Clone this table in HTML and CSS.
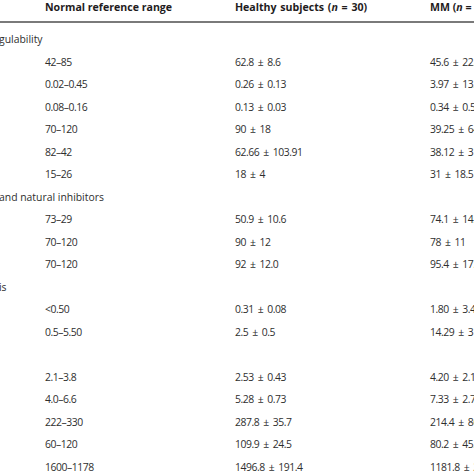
FILE: index.html
```html
<!DOCTYPE html>
<html>
<head>
<meta charset="utf-8">
<link rel="stylesheet" href="styles.css">
</head>
<body>
<div class="table">
  <div class="row head">
    <span class="c1"></span>
    <span class="c2">Normal reference range</span>
    <span class="c3">Healthy subjects (<i>n</i> = 30)</span>
    <span class="c4">MM (<i>n</i> = 30)</span>
  </div>
  <div class="rule"></div>
  <div class="tbody">
    <div class="row cat"><span class="lab">gulability</span></div>
    <div class="row"><span class="c1"></span><span class="c2 num">42–85</span><span class="c3 num">62.8 ± 8.6</span><span class="c4 num">45.6 ± 22.1</span></div>
    <div class="row"><span class="c1"></span><span class="c2 num">0.02–0.45</span><span class="c3 num">0.26 ± 0.13</span><span class="c4 num">3.97 ± 13.2</span></div>
    <div class="row"><span class="c1"></span><span class="c2 num">0.08–0.16</span><span class="c3 num">0.13 ± 0.03</span><span class="c4 num">0.34 ± 0.51</span></div>
    <div class="row"><span class="c1"></span><span class="c2 num">70–120</span><span class="c3 num">90 ± 18</span><span class="c4 num">39.25 ± 64.1</span></div>
    <div class="row"><span class="c1"></span><span class="c2 num">82–42</span><span class="c3 num">62.66 ± 103.91</span><span class="c4 num">38.12 ± 3</span></div>
    <div class="row"><span class="c1"></span><span class="c2 num">15–26</span><span class="c3 num">18 ± 4</span><span class="c4 num">31 ± 18.5</span></div>
    <div class="row cat"><span class="lab">and natural inhibitors</span></div>
    <div class="row"><span class="c1"></span><span class="c2 num">73–29</span><span class="c3 num">50.9 ± 10.6</span><span class="c4 num">74.1 ± 14.2</span></div>
    <div class="row"><span class="c1"></span><span class="c2 num">70–120</span><span class="c3 num">90 ± 12</span><span class="c4 num">78 ± 11</span></div>
    <div class="row"><span class="c1"></span><span class="c2 num">70–120</span><span class="c3 num">92 ± 12.0</span><span class="c4 num">95.4 ± 17.3</span></div>
    <div class="row cat"><span class="lab">is</span></div>
    <div class="row"><span class="c1"></span><span class="c2 num">&lt;0.50</span><span class="c3 num">0.31 ± 0.08</span><span class="c4 num">1.80 ± 3.41</span></div>
    <div class="row"><span class="c1"></span><span class="c2 num">0.5–5.50</span><span class="c3 num">2.5 ± 0.5</span><span class="c4 num">14.29 ± 3</span></div>
    <div class="row cat"><span class="lab"></span></div>
    <div class="row"><span class="c1"></span><span class="c2 num">2.1–3.8</span><span class="c3 num">2.53 ± 0.43</span><span class="c4 num">4.20 ± 2.11</span></div>
    <div class="row"><span class="c1"></span><span class="c2 num">4.0–6.6</span><span class="c3 num">5.28 ± 0.73</span><span class="c4 num">7.33 ± 2.71</span></div>
    <div class="row"><span class="c1"></span><span class="c2 num">222–330</span><span class="c3 num">287.8 ± 35.7</span><span class="c4 num">214.4 ± 86.2</span></div>
    <div class="row"><span class="c1"></span><span class="c2 num">60–120</span><span class="c3 num">109.9 ± 24.5</span><span class="c4 num">80.2 ± 45.1</span></div>
    <div class="row"><span class="c1"></span><span class="c2 num">1600–1178</span><span class="c3 num">1496.8 ± 191.4</span><span class="c4 num">1181.8 ± 210.5</span></div>
  </div>
</div>
</body>
</html>
```

FILE: styles.css
```css
html, body {
  margin: 0;
  padding: 0;
  background: #ffffff;
}
body {
  width: 474px;
  height: 474px;
  overflow: hidden;
  font-family: "Open Sans", "Noto Sans", sans-serif;
  font-size: 10.4px;
  color: #2e2e2e;
}
.table {
  width: 474px;
  overflow: hidden;
}
.row {
  display: grid;
  grid-template-columns: 45px 190px 195px 200px;
  height: 22.5px;
  line-height: 22.5px;
  white-space: nowrap;
}
.head {
  height: 15px;
  line-height: 15px;
  font-weight: 700;
  font-size: 10.6px;
  color: #1f1c1d;
}
.head .c3 {
  word-spacing: 1px;
}
.head i {
  font-weight: 700;
}
.rule {
  margin-top: 6px;
  height: 2px;
  background: #7a7a7a;
}
.tbody {
  padding-top: 5px;
}
.cat {
  display: block;
}
.cat .lab {
  display: block;
  margin-left: -1px;
}
.num {
  letter-spacing: -0.45px;
  word-spacing: 1.8px;
}
```
